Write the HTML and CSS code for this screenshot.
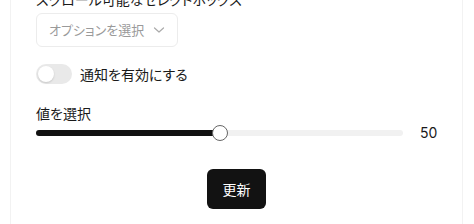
FILE: index.html
```html
<!DOCTYPE html>
<html lang="ja">
<head>
    <meta charset="UTF-8">
    <meta name="viewport" content="width=device-width, initial-scale=1.0">
    <title>設定</title>
    <link rel="stylesheet" href="styles.css">
</head>
<body>
    <div class="card">
        <div class="field-label">スクロール可能なセレクトボックス</div>
        <div class="select">
            <span class="select-text">オプションを選択</span>
            <svg class="chevron" width="12" height="12" viewBox="0 0 12 12">
                <path d="M1.5 4 L6 8 L10.5 4" fill="none" stroke="#aaa" stroke-width="1.2" stroke-linecap="round" stroke-linejoin="round"/>
            </svg>
        </div>

        <div class="toggle-row">
            <div class="toggle"><div class="knob"></div></div>
            <span>通知を有効にする</span>
        </div>

        <div class="field-label slider-label">値を選択</div>
        <div class="slider-row">
            <div class="track">
                <div class="fill" style="width: 50%"></div>
                <div class="thumb" style="left: 50%"></div>
            </div>
            <span class="value">50</span>
        </div>

        <div class="actions">
            <button class="btn">更新</button>
        </div>
    </div>
</body>
</html>
```

FILE: styles.css
```css
body {
    margin: 0;
    font-family: "Noto Sans CJK JP", "Noto Sans", sans-serif;
    font-size: 14px;
    font-feature-settings: "palt";
    color: #1a1a1a;
    background-color: #fff;
    overflow: hidden;
}
.card {
    margin: -30px 0 0 10px;
    width: 453px;
    box-sizing: border-box;
    border: 1px solid #f2f2f2;
    border-radius: 8px;
    padding: 18px 25px 40px;
}
.field-label {
    line-height: 20px;
    margin-bottom: 4px;
}
.select {
    display: inline-flex;
    align-items: center;
    gap: 9px;
    height: 34px;
    box-sizing: border-box;
    padding: 0 12px 0 12px;
    border: 1px solid #ececec;
    border-radius: 6px;
    color: #9a9a9a;
}
.select-text {
    font-size: 13px;
    line-height: 20px;
}
.chevron {
    display: block;
}
.toggle-row {
    display: flex;
    align-items: center;
    gap: 8px;
    margin-top: 17px;
    height: 20px;
    line-height: 20px;
}
.toggle {
    width: 36px;
    height: 20px;
    border-radius: 10px;
    background-color: #e9e9e9;
    box-sizing: border-box;
    padding: 2px;
}
.knob {
    width: 16px;
    height: 16px;
    border-radius: 50%;
    background-color: #fff;
    box-shadow: 0 1px 2px rgba(0,0,0,0.15);
}
.slider-label {
    margin-top: 19px;
    margin-bottom: 2px;
}
.slider-row {
    display: flex;
    align-items: center;
    gap: 17px;
    height: 16px;
}
.track {
    position: relative;
    flex: 1;
    height: 6px;
    border-radius: 3px;
    background-color: #f1f1f1;
}
.fill {
    height: 100%;
    border-radius: 3px;
    background-color: #111;
}
.thumb {
    position: absolute;
    top: 50%;
    width: 16px;
    height: 16px;
    margin: -8px 0 0 -8px;
    box-sizing: border-box;
    border-radius: 50%;
    border: 1px solid #666;
    background-color: #fff;
}
.value {
    font-family: Inter, "Noto Sans", sans-serif;
    font-size: 14px;
    width: 17px;
    line-height: 16px;
}
.actions {
    display: flex;
    justify-content: center;
    margin-top: 28px;
}
.btn {
    width: 59px;
    height: 40px;
    border: none;
    border-radius: 6px;
    background-color: #121212;
    color: #fff;
    font-family: "Noto Sans CJK JP", sans-serif;
    font-size: 14px;
    cursor: pointer;
}
```
